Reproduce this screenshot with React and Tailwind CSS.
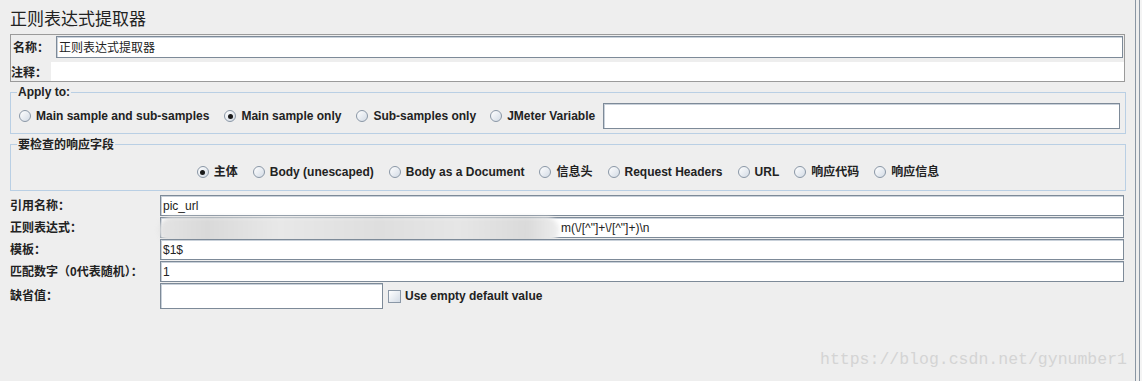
import React from "react";

function Radio({ checked }) {
  return (
    <span className="flex h-[12px] w-[12px] shrink-0 items-center justify-center rounded-full border border-[#8a97a6] bg-[linear-gradient(135deg,#ffffff,#d3dbe5)]">
      {checked && <span className="h-[5px] w-[5px] rounded-full bg-[#1a1a1a]" />}
    </span>
  );
}

function RadioItem({ checked, label }) {
  return (
    <span className="flex items-center gap-[5px]">
      <Radio checked={checked} />
      <span className="whitespace-nowrap text-[12px] font-bold leading-[14px] text-[#222]">{label}</span>
    </span>
  );
}

function Row({ label, children, tall }) {
  return (
    <div className={"flex items-start " + (tall ? "h-[26px]" : "h-[22px]")}>
      <div className={"flex w-[150px] shrink-0 items-center text-[12px] font-bold text-[#222] " + (tall ? "h-[26px]" : "h-[21px]")}>
        {label}
      </div>
      {children}
    </div>
  );
}

function Input({ children, className = "" }) {
  return (
    <div className={"relative flex h-[21px] items-center overflow-hidden border border-[#7d8a98] bg-white pl-[2px] text-[12px] text-[#222] shadow-[inset_1px_1px_0_#c9d1da] " + className}>
      {children}
    </div>
  );
}

export default function App() {
  return (
    <div className="relative flex h-[381px] w-[1142px] overflow-hidden bg-[#eeeeee] font-['Liberation_Sans','Noto_Sans_CJK_SC',sans-serif]">
      <div className="flex w-[1135px] flex-col pl-[10px] pr-[9px] pt-[6px]">
        {/* Title */}
        <div className="h-[26px] font-['Noto_Sans_CJK_SC',sans-serif] text-[17px] leading-[24px] text-[#222]">
          正则表达式提取器
        </div>

        {/* Name / comment box */}
        <div className="mt-[2px] w-[1115px] border border-[#9a9a9a]">
          <div className="flex h-[23px] items-start">
            <div className="flex h-[23px] w-[45px] shrink-0 items-center pl-[2px] font-['Noto_Sans_CJK_SC',sans-serif] text-[12px] font-bold text-[#222]">
              名称：
            </div>
            <div className="mr-[1px] mt-px flex h-[22px] flex-1 items-center border border-[#7d8a98] bg-white pl-[2px] font-['Noto_Sans_CJK_SC',sans-serif] text-[12px] text-[#222] shadow-[inset_1px_1px_0_#c9d1da]">
              正则表达式提取器
            </div>
          </div>
          <div className="mt-[4px] flex h-[19px] items-center">
            <div className="w-[40px] shrink-0 font-['Noto_Sans_CJK_SC',sans-serif] text-[12px] font-bold text-[#222]">
              注释：
            </div>
            <div className="h-[19px] flex-1 bg-white" />
          </div>
        </div>

        {/* Apply to */}
        <fieldset className="mt-[3px] border border-[#b9cfe4]">
          <legend className="ml-[6px] px-[1px] text-[12px] font-bold leading-[14px] text-[#222]">Apply to:</legend>
          <div className="mt-[4px] mb-[4px] flex h-[26px] items-center pl-[8px] pr-[5px]">
            <RadioItem label="Main sample and sub-samples" />
            <span className="ml-[15px]"><RadioItem checked label="Main sample only" /></span>
            <span className="ml-[15px]"><RadioItem label="Sub-samples only" /></span>
            <span className="ml-[14px]"><RadioItem label="JMeter Variable" /></span>
            <div className="ml-[8px] h-[26px] flex-1 border border-[#7d8a98] bg-white shadow-[inset_1px_1px_0_#c9d1da]" />
          </div>
        </fieldset>

        {/* Response field */}
        <fieldset className="mt-[3px] border border-[#b9cfe4]">
          <legend className="ml-[6px] px-[1px] font-['Noto_Sans_CJK_SC',sans-serif] text-[12px] font-bold leading-[14px] text-[#222]">
            要检查的响应字段
          </legend>
          <div className="mt-[11px] mb-[8px] flex h-[20px] items-center justify-center gap-[15px]">
            <RadioItem checked label="主体" />
            <RadioItem label="Body (unescaped)" />
            <RadioItem label="Body as a Document" />
            <RadioItem label="信息头" />
            <RadioItem label="Request Headers" />
            <RadioItem label="URL" />
            <RadioItem label="响应代码" />
            <RadioItem label="响应信息" />
          </div>
        </fieldset>

        {/* Lower form */}
        <div className="mt-[4px] flex flex-col">
          <Row label="引用名称：">
            <Input className="mr-[2px] flex-1">pic_url</Input>
          </Row>
          <Row label="正则表达式：">
            <Input className="mr-[2px] flex-1 overflow-visible">
              <span className="relative block h-[19px] w-[398px] shrink-0">
                <span className="absolute -left-[4px] -top-[1px] h-[26px] w-[400px] rounded-full bg-[linear-gradient(90deg,#e4e4e4,#d9d9d9_12%,#e8e8e8_30%,#dedede_55%,#e6e6e6_75%,#dadada_92%,#eeeeee)] blur-[2px]" />
              </span>
              <span className="relative">m(\/[^"]+\/[^"]+)\n</span>
            </Input>
          </Row>
          <Row label="模板：">
            <Input className="mr-[2px] flex-1 text-[#2f7a2f]">$1$</Input>
          </Row>
          <Row label="匹配数字（0代表随机）：">
            <Input className="mr-[2px] flex-1">1</Input>
          </Row>
          <Row label="缺省值：" tall>
            <div className="h-[26px] w-[223px] border border-[#7d8a98] bg-white shadow-[inset_1px_1px_0_#c9d1da]" />
            <div className="ml-[5px] flex h-[26px] items-center gap-[4px]">
              <span className="h-[13px] w-[13px] border border-[#8a97a6] bg-[linear-gradient(135deg,#ffffff,#d3dbe5)]" />
              <span className="text-[12px] font-bold text-[#222]">Use empty default value</span>
            </div>
          </Row>
        </div>
      </div>

      {/* Right edge */}
      <div className="flex h-full w-[7px]">
        <span className="h-full w-px bg-[#8a96a3]" />
        <span className="h-full w-[3px] bg-[#eeeeee]" />
        <span className="h-full w-px bg-[#8a96a3]" />
        <span className="h-full w-[2px] bg-[#f4f4f4]" />
      </div>

      {/* Watermark */}
      <div className="absolute left-[820px] top-[350px] font-['Liberation_Mono',monospace] text-[16.5px] leading-[20px] text-[#d4d4d4]">
        https://blog.csdn.net/gynumber1
      </div>
    </div>
  );
}
